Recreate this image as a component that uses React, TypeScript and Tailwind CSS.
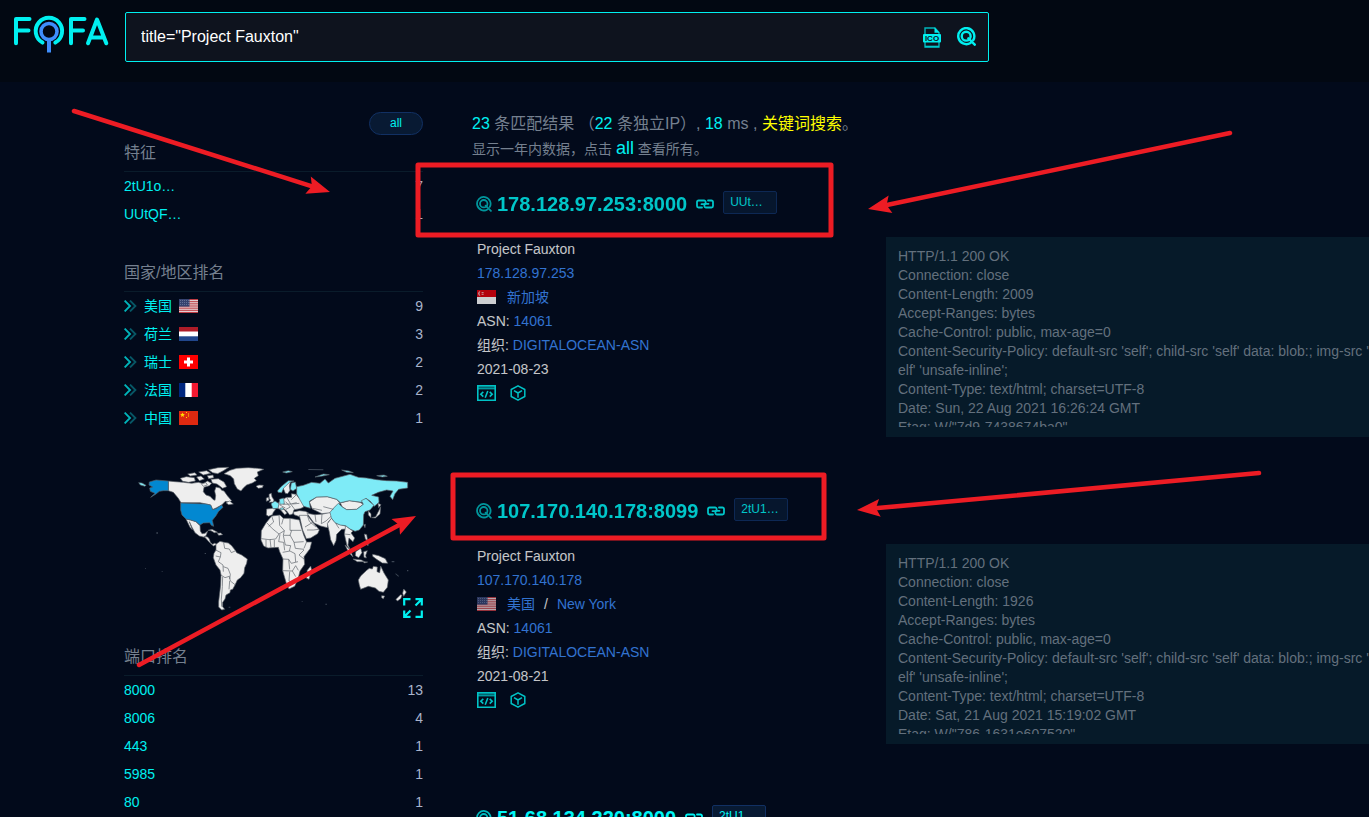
import React from 'react';

type Country = { code: string; name: string; count: number };

type Result = {
  host: string;
  ip: string;
  tag: string;
  country: string;
  code: string;
  city?: string;
  date: string;
  banner: string[];
  dimmed: boolean;
};

const features = [
  { name: '2tU1o…', count: 7 },
  { name: 'UUtQF…', count: 1 },
];

const countries: Country[] = [
  { code: 'us', name: '美国', count: 9 },
  { code: 'nl', name: '荷兰', count: 3 },
  { code: 'ch', name: '瑞士', count: 2 },
  { code: 'fr', name: '法国', count: 2 },
  { code: 'cn', name: '中国', count: 1 },
];

const ports = [
  { name: '8000', count: 13 },
  { name: '8006', count: 4 },
  { name: '443', count: 1 },
  { name: '5985', count: 1 },
  { name: '80', count: 1 },
];

const makeBanner = (length: string, date: string, etag: string) => [
  'HTTP/1.1 200 OK',
  'Connection: close',
  `Content-Length: ${length}`,
  'Accept-Ranges: bytes',
  'Cache-Control: public, max-age=0',
  "Content-Security-Policy: default-src 'self'; child-src 'self' data: blob:; img-src 's",
  "elf' 'unsafe-inline';",
  'Content-Type: text/html; charset=UTF-8',
  `Date: ${date}`,
  `Etag: W/"${etag}"`,
];

const results: Result[] = [
  {
    host: '178.128.97.253:8000',
    ip: '178.128.97.253',
    tag: 'UUt…',
    country: '新加坡',
    code: 'sg',
    date: '2021-08-23',
    banner: makeBanner('2009', 'Sun, 22 Aug 2021 16:26:24 GMT', '7d9-7438674ba0'),
    dimmed: true,
  },
  {
    host: '107.170.140.178:8099',
    ip: '107.170.140.178',
    tag: '2tU1…',
    country: '美国',
    code: 'us',
    city: 'New York',
    date: '2021-08-21',
    banner: makeBanner('1926', 'Sat, 21 Aug 2021 15:19:02 GMT', '786-1631e607520'),
    dimmed: true,
  },
  {
    host: '51.68.134.220:8000',
    ip: '51.68.134.220',
    tag: '2tU1…',
    country: '法国',
    code: 'fr',
    date: '2021-08-20',
    banner: makeBanner('1926', 'Fri, 20 Aug 2021 11:02:40 GMT', '786-1631e607520'),
    dimmed: false,
  },
];

const Logo: React.FC = () => (
  <svg width="96" height="40" viewBox="13 15 96 40" fill="none" strokeLinecap="round" strokeLinejoin="round" strokeWidth="4" role="img" aria-label="FOFA">
    <g stroke="#00f0f0">
      <path d="M29.5 19H16V43.3M16 30.5h12.500" />
      <path d="M42.5 42.6A13.200 13.200 0 1 1 55.300 42.600" />
      <path d="M84.5 19H71V43.3M71 30.5h12" />
      <path d="M88 43.300L97 19.500L106.300 43.300M91 37.500h12" />
    </g>
    <g stroke="#3f8efc">
      <circle cx="49" cy="31.500" r="8" strokeWidth="3.600" />
      <path d="M49 40v12.500" strokeLinecap="butt" />
    </g>
  </svg>
);

const QueryIcon: React.FC<{ size: number; weight: number }> = ({ size, weight }) => (
  <svg width={size} height={size} viewBox="0 0 18 18" fill="none" stroke="currentColor" strokeWidth={weight} strokeLinecap="round" className="block" aria-hidden="true">
    <path d="M12.800 15.100A7.600 7.600 0 1 1 15.400 12.400" />
    <circle cx="8.700" cy="8.700" r="4.200" />
    <path d="M10.800 10.800L16.800 16.800" />
  </svg>
);

const IcoIcon: React.FC = () => (
  <svg width="18" height="21" viewBox="0 0 18 21" fill="none" className="block" aria-hidden="true">
    <path d="M2 8V1h10L16 5.500v2M2 14.500V20h14v-5.500" stroke="#00b5ba" strokeWidth="1.400" />
    <path d="M11.500 .5L16.500 5.700h-5z" fill="#00f0f0" />
    <path d="M2 19.500h14" stroke="#00c8cc" strokeWidth="1.600" />
    <rect x="0" y="7" width="18" height="8.500" rx="1" fill="#00f0f0" />
    <text x="9" y="14.200" textAnchor="middle" fill="#0e131e" fontSize="8" fontWeight="700" fontFamily="Liberation Sans, sans-serif">ICO</text>
  </svg>
);

const LinkIcon: React.FC = () => (
  <svg width="18" height="10" viewBox="0 0 18 10" fill="none" stroke="currentColor" strokeWidth="1.800" strokeLinecap="round" aria-hidden="true">
    <path d="M5.500 5.200H8a1.300 1.300 0 0 0 1.600-1.300V3A1.500 1.500 0 0 0 8 1.500H2.500A1.500 1.500 0 0 0 1 3v4a1.500 1.500 0 0 0 1.500 1.500H6" />
    <path d="M12.500 4.800H10a1.300 1.300 0 0 0-1.600 1.300V7A1.500 1.500 0 0 0 10 8.500h5.500A1.500 1.500 0 0 0 17 7V3a1.500 1.500 0 0 0-1.500-1.500H12" />
  </svg>
);

const CodeIcon: React.FC = () => (
  <svg width="19" height="16" viewBox="0 0 19 16" fill="none" stroke="currentColor" strokeWidth="1.600" aria-hidden="true">
    <path d="M1 1h17v2.500H1z" fill="currentColor" fillOpacity=".5" stroke="none" />
    <path d="M.8.8h17.400v14.400H.8z" />
    <path d="M1 3.800h17" strokeWidth="1" />
    <path d="M6.300 6.800L3.800 9.200l2.500 2.400M12.700 6.800l2.500 2.400-2.500 2.400M10.800 6L8.200 12.700" />
  </svg>
);

const CubeIcon: React.FC = () => (
  <svg width="16" height="16" viewBox="0 0 16 16" fill="none" stroke="currentColor" strokeWidth="1.500" strokeLinejoin="round" aria-hidden="true">
    <path d="M8 .8l6.800 3.700v7L8 15.200 1.200 11.500v-7z" />
    <path d="M4 5.600L8 8l4-2.400M8 8v4.800" />
  </svg>
);

const ChevronsIcon: React.FC = () => (
  <svg width="13" height="12" viewBox="0 0 13 12" fill="none" strokeWidth="1.900" aria-hidden="true">
    <path d="M6 .6L11.400 6 6 11.400" stroke="#075766" />
    <path d="M.6.600L6 6 .6 11.400" stroke="#00b4ba" />
  </svg>
);

const Flag: React.FC<{ code: string }> = ({ code }) => (
  <svg width="19" height="14" viewBox="0 0 19 14" aria-hidden="true">
    {code === 'us' && (
      <>
        <rect width="19" height="14" fill="#e8dfe2" />
        {[0, 1, 2, 3, 4, 5, 6].map((row) => (
          <rect key={row} y={row * 2.15} width="19" height="1.1" fill="#bd3d44" />
        ))}
        <rect width="10.500" height="7.600" fill="#35426f" />
        <path d="M1 1.500h9M1 3.500h9M1 5.500h9" stroke="#7783a6" strokeWidth=".7" strokeDasharray="1 1" />
      </>
    )}
    {code === 'nl' && (
      <>
        <rect width="19" height="14" fill="#fff" />
        <rect width="19" height="4.500" fill="#ae1c28" />
        <rect y="9.300" width="19" height="4.700" fill="#21468b" />
      </>
    )}
    {code === 'ch' && (
      <>
        <rect width="19" height="14" fill="#f00" />
        <path d="M9.500 2.500v9M5 7h9" stroke="#fff" strokeWidth="3" />
      </>
    )}
    {code === 'fr' && (
      <>
        <rect width="19" height="14" fill="#fff" />
        <rect width="6.300" height="14" fill="#00267f" />
        <rect x="12.700" width="6.300" height="14" fill="#f31830" />
      </>
    )}
    {code === 'cn' && (
      <>
        <rect width="19" height="14" fill="#de2910" />
        <path d="M3.500 1.500l.7 1.600 1.700.1-1.300 1.100.4 1.700-1.500-.9L2 6l.4-1.700-1.300-1.100 1.700-.1z" fill="#ffde00" />
        <path d="M7 1.500h1M9 3h1M9 5h1M7 6.500h1" stroke="#ffde00" strokeWidth="1.100" />
      </>
    )}
    {code === 'sg' && (
      <>
        <rect width="19" height="14" fill="#fff" />
        <rect width="19" height="7" fill="#e0000a" />
        <path d="M3.500 1.300a2.200 2.200 0 1 0 0 4.400 2.600 2.600 0 0 1 0-4.400z" fill="#fff" />
        <path d="M4.600 2.600h2M4.600 4.300h2" stroke="#fff" strokeWidth=".7" />
      </>
    )}
  </svg>
);

const WorldMap: React.FC = () => (
  <svg width="300" height="170" viewBox="12 0 900 510" className="block" role="img" aria-label="World map">
    <g stroke="#5b6068" strokeWidth="2" strokeLinejoin="round">
      <g fill="#eeeeee">
        {/* North America */}
        <path d="M145 78L165 80 190 82 215 85 235 82 250 86 262 78 275 85 268 92 252 97 250 110 258 120 270 124 280 134 285 136 287 122 284 108 288 96 300 99 305 106 312 108 322 122 335 137 326 141 316 139 305 150 290 158 278 164 272 150 258 147 240 143 183 143 175 130 160 112 145 107z" />
        <path d="M181 70l18-5 24 3 3 10-20 4-18-3zM203 57l22-4 6 7-20 3zM230 66l13-3 10 9-15 5zM236 51l24-4 12 8-22 5zM262 62l17-2 2 8-15 3zM273 73l22-2 17 10 8 14-12 5-17-13-14-3zM266 44l28-6 32-1-16 10-17 9-15-3zM244 86l14-3 4 7-12 4zM318 143l11-5 11 9-14 2z" />
        <path d="M312 56L330 46 350 40 385 38 412 40 431 43 412 51 415 62 403 70 409 77 397 84 380 90 370 99 363 108 352 102 343 86 341 72 331 62z" />
        <path d="M408 94l9-4 13 1-3 7-12 2z" />
        <path d="M198 192L212 195 228 200 240 212 241 228 246 236 255 235 263 228 259 240 253 247 238 243 225 233 216 217 208 200 217 224 210 217z" />
        <path d="M252 244L263 246 268 252 271 262 278 268 285 264 289 269 280 273 268 262zM264 226l12-3 17 9-10 1-10-6zM292 235l10-1 6 5-12 2z" />
        {/* South America */}
        <path d="M288 268L300 259 312 262 325 264 335 272 345 285 350 293 365 300 382 312 380 325 374 338 372 355 362 368 352 375 345 390 338 403 331 405 330 413 318 420 315 432 308 442 308 455 314 463 305 465 296 456 296 440 299 415 302 390 303 360 300 345 288 330 280 308 282 295 288 285z" />
        {/* Europe */}
        <path d="M447 118l7-3 2 11 6 9-2 6-13 1 5-7-4-4zM439 129l7-2 1 9-8 3zM440 162l18-2 9 3-7 9-3 7-11 5-7-4zM488 98l14-16 10-3-4 14 2 13-7 10-7-1-4-10z" />
        <path d="M477 140L490 132 500 127 515 127 514 116 528 118 538 130 553 145 550 157 540 161 522 164 518 177 509 180 500 168 490 160 501 175 494 179 480 163 473 160z" />
        <path d="M520 171l18-4 18 2 10 5-3 10-24 1-17-6z" />
        {/* Africa */}
        <path d="M455 183L480 180 490 190 510 190 538 195 543 214 551 240 560 261 575 261 570 281 552 305 554 328 540 348 534 372 524 394 507 402 499 385 488 347 489 312 479 290 475 277 444 279 431 273 423 255 424 227 438 204z" />
        <path d="M562 346l10-13 3 13-8 27-8-4z" />
        {/* Middle East and Asia */}
        <path d="M538 181L562 181 578 202 590 215 598 225 593 236 572 249 559 251 548 225z" />
        <path d="M561 175L585 179 610 177 632 171 638 187 625 201 622 218 602 213 582 204z" />
        <path d="M568 141L590 126 622 125 650 133 660 145 644 157 631 173 606 176 577 162z" />
        <path d="M622 206L634 190 648 205 675 213 688 211 680 222 665 223 650 238 648 257 641 272 632 254 628 231z" />
        <path d="M677 212L690 222 699 228 693 234 704 249 699 260 687 249 684 270 692 286 681 272 673 237z" />
        <path d="M661 144L688 137 720 142 730 148 710 163 680 164 667 156z" />
        <path d="M745 168l8 8 0 12-8-8zM755 188l12-3 9-17 6-13-2 22-14 12zM774 145l9 4-7 9zM733 237l7 2 3 18-7-5zM738 263l7-1-1 10zM732 210l4-2-1 10z" />
        <path d="M675 270l15 14 9 22-12-12zM699 312l25 3 10 5-22 0zM707 290l15-10 4 13-10 15-10-6zM731 290l11-3-5 14 2 8-7-2zM730 320l13 1-10 3zM758 298l18 4 20 9 7 14-16-1-17-11-12-9z" />
        {/* Oceania */}
        <path d="M715 375L722 363 740 346 748 340 757 342 760 334 772 336 771 350 779 353 782 333 792 354 805 375 802 397 790 412 777 409 766 399 745 394 722 403 718 390zM785 422l9 1-4 8-5-3zM851 402l8 9-8 13-3-9zM846 421l-4 10-10 7-4-5 14-14z" />
      </g>
      <g fill="#0288d1">
        <path d="M88 81L108 75 145 78 145 107 130 107 118 109 108 117 92 127 105 115 91 109 89 99 98 96 87 90z" />
        <path d="M182 144L258 147 272 150 278 164 290 160 305 150 309 157 295 170 288 182 277 196 281 214 274 211 269 203 250 204 240 210 228 200 212 195 198 192 186 180 182 165z" />
      </g>
      <g fill="#7eebf7">
        <path d="M530 95L550 91 575 82 600 85 615 72 625 84 645 70 690 58 715 67 740 69 770 74 800 77 830 78 863 82 863 99 836 103 825 116 818 134 810 124 819 108 800 105 775 112 755 121 776 126 777 142 763 154 751 139 738 130 726 142 688 137 661 143 650 133 622 125 590 126 568 139 571 160 551 154 540 135 530 117z" />
        <path d="M630 172L643 157 655 145 667 156 680 164 710 163 730 148 724 137 738 130 751 142 762 151 750 165 735 170 731 179 730 210 718 225 705 229 690 222 677 212 660 210 645 203 634 189z" />
        <path d="M453 146L465 138 477 146 474 160 459 161zM478 133l13-4 2 18-13 1zM473 107l10-12 22-18 17 1-13 4-18 17-6 14-11-1zM514 84l12-3 4 19-11 8-8-5zM488 51l17-4 12 3-18 4zM56 83l10 1 12 7-3 3-14-4zM480 160l9-2 3 5-10 2zM585 66l25-9 18 2-25 5zM665 45l22 3 13 5-20-1zM770 62l22-2 10 4-15 2z" />
      </g>
      <g fill="none">
        <path d="M287 285l16 8-2 13-14-3M311 263l3 17 14 2 6 11 11-5M301 306l-6 14 14 10 1 20M310 335l14 5 7 18-2 14M303 360l12 8 13-4 3 14 14 11M308 365l-1 30-3 38 1 22M329 378l-2 25" />
        <path d="M440 203l17 18 20 16M455 183l6 18-15 13M477 181l2 30 14 16M490 190l-5 18M510 190v36h34M515 226l-5 15-20 0 3-14-16 10-10 15-19 2-24-3M480 238l-4 22M438 254v23M450 252l3 26M463 255v23M476 260l15 2 3 24M490 242l6 28 16 2M510 240l12 22 29-2M512 272l-4 16M522 262l4 18 26 3M488 292l22-4 15 8 2 25M488 312l18 1 8 12 20-5M506 313l3 30M488 347l29 1 10-16 8 14M509 350l-2 28 12 6 15-10M517 348l10 17M552 285l-15 15 15 12M560 260l-8 20" />
        <path d="M562 181l6 18 20 17M578 202l-23 14M561 225l19 0 16-2M585 179l3 22M606 176l-2 30 14-8 15-14M610 155l30 8M578 160l28 6M673 237l18 2M647 205l10 15M500 127l12 20 18-4M490 148l22-1 12 16M497 140l14 16-13 7M530 118l-16 16M538 145l-21 2M478 149l18 10" />
      </g>
    </g>
    <g fill="#3c4654">
      <path d="M109 232h5v4h-5zM254 294h4v3h-4zM326 455h5v3h-5zM125 348h3v2h-3zM75 340h3v2h-3zM545 439h3v2h-3zM616 446h5v3h-5zM827 355l10 8-2 2-9-8zM815 318h8v4h-8zM861 345h4v4h-4zM565 42l45 1v3l-45-1z" />
    </g>
  </svg>
);

const ExpandIcon: React.FC = () => (
  <svg width="20" height="20" viewBox="0 0 20 20" fill="none" stroke="#00f0f0" strokeWidth="2.200" className="block" aria-hidden="true">
    <path d="M1.200 7.500V1.200h6.300M12.500 1.200h6.300v6.300M18.800 12.500v6.300h-6.300M7.500 18.800H1.200v-6.300M12.500 7.500l6-6M7.500 12.500l-6 6" />
  </svg>
);

const SectionTitle: React.FC<{ children: React.ReactNode }> = ({ children }) => (
  <h2 className="box-content h-[30px] border-b border-[#0a1c2b] text-base leading-6 text-[#75808f]">{children}</h2>
);

const Row: React.FC<{ count: number; children: React.ReactNode }> = ({ count, children }) => (
  <li className="flex h-7 items-center justify-between text-sm">
    <a href="#" className="flex items-center gap-[7px] text-[#00f0f0]">
      {children}
    </a>
    <span className="text-[#a9b4cc]">{count}</span>
  </li>
);

const ResultCard: React.FC<{ result: Result }> = ({ result }) => (
  <article className="mb-[61px]">
    <div className={`mb-5 flex h-[26px] items-center pl-1 text-[#00f5f5] ${result.dimmed ? 'opacity-80' : ''}`}>
      <span className="opacity-75">
        <QueryIcon size={16} weight={2} />
      </span>
      <a href="#" className="ml-[5px] text-xl font-bold leading-6">
        {result.host}
      </a>
      <a href="#" aria-label="Open link" className="ml-[9px]">
        <LinkIcon />
      </a>
      <a href="#" className="ml-[9px] h-[23px] w-[54px] self-start rounded-[2px] border border-[#113063] bg-[#081a33] px-1.5 text-xs leading-5">
        {result.tag}
      </a>
    </div>
    <div className="flex">
      <div className={`w-[414px] shrink-0 pl-[5px] text-sm leading-6 text-[#f5f5f5] ${result.dimmed ? 'opacity-80' : ''}`}>
        <p>Project Fauxton</p>
        <p>
          <a href="#" className="text-[#3f8efc]">{result.ip}</a>
        </p>
        <p className="flex h-6 items-center">
          <Flag code={result.code} />
          <a href="#" className="ml-[11px] text-[#3f8efc]">{result.country}</a>
          {result.city && (
            <>
              <span className="mx-[9px]">/</span>
              <a href="#" className="text-[#3f8efc]">{result.city}</a>
            </>
          )}
        </p>
        <p>
          ASN: <a href="#" className="text-[#3f8efc]">14061</a>
        </p>
        <p className="h-6">
          组织: <a href="#" className="text-[#3f8efc]">DIGITALOCEAN-ASN</a>
        </p>
        <p>{result.date}</p>
        <div className="flex h-6 items-center gap-[14px] text-[#00f0f0]">
          <button type="button" aria-label="Show source"><CodeIcon /></button>
          <button type="button" aria-label="Show components"><CubeIcon /></button>
        </div>
      </div>
      <div className="h-[200px] min-w-0 flex-1 bg-[#061a29] py-2.5 pl-3">
        <pre className="h-full overflow-hidden font-[Liberation_Sans,Noto_Sans_CJK_SC,sans-serif] text-sm leading-[19px] text-[#63707d]">
          {result.banner.join('\n')}
        </pre>
      </div>
    </div>
  </article>
);

const arrows = [
  { from: [74, 111], to: [330, 192] },
  { from: [1230, 133], to: [868, 209] },
  { from: [1259, 473], to: [857, 510] },
  { from: [139, 665], to: [416, 516] },
];

// Red marker strokes drawn over the page
const Annotations: React.FC = () => (
  <svg width="1369" height="817" className="pointer-events-none absolute left-0 top-0" fill="none" aria-hidden="true">
    <g stroke="#ed1c24" strokeWidth="5" strokeLinejoin="round">
      <rect x="418" y="165" width="413" height="70" />
      <rect x="453" y="475" width="371" height="63" />
    </g>
    {arrows.map(({ from, to }, index) => {
      const dx = to[0] - from[0];
      const dy = to[1] - from[1];
      const length = Math.hypot(dx, dy);
      const angle = (Math.atan2(dy, dx) * 180) / Math.PI;
      return (
        <g key={index} transform={`translate(${to[0]} ${to[1]}) rotate(${angle})`}>
          <path d={`M${-length} 0H-18`} stroke="#ed1c24" strokeWidth="4.500" strokeLinecap="round" />
          <path d="M0 0L-23 -9L-19 0L-23 9z" fill="#ed1c24" />
        </g>
      );
    })}
  </svg>
);

const App: React.FC = () => {
  return (
    <div className="relative h-screen overflow-hidden bg-[#020a1b] font-[Liberation_Sans,Noto_Sans_CJK_SC,sans-serif]">
      <header className="flex h-[82px] items-start bg-[#020812] pl-[13px] pt-3">
        <a href="#" className="mr-4 mt-[3px]">
          <Logo />
        </a>
        <form className="flex h-[50px] w-[864px] items-center rounded-[2px] border border-[#00f0f0] bg-[#0e131e] pl-[15px] pr-3">
          <input
            type="text"
            aria-label="Search query"
            defaultValue={'title="Project Fauxton"'}
            className="min-w-0 flex-1 bg-transparent text-base text-white outline-none"
          />
          <div className="flex items-start gap-4">
            <button type="button" aria-label="Search by icon">
              <IcoIcon />
            </button>
            <button type="button" aria-label="Search" className="text-[#00f0f0]">
              <QueryIcon size={19} weight={2.3} />
            </button>
          </div>
        </form>
      </header>

      <div className="flex pl-[124px]">
        <aside className="mr-[49px] w-[299px] shrink-0 pt-[30px]">
          <div className="mb-1.5 flex justify-end">
            <button type="button" className="h-[23px] w-[54px] rounded-full border border-[#113063] bg-[#081a33] pb-0.5 text-xs leading-4 text-[#00f0f0]">
              all
            </button>
          </div>

          <SectionTitle>特征</SectionTitle>
          <ul className="mb-[33px]">
            {features.map((item) => (
              <Row key={item.name} count={item.count}>{item.name}</Row>
            ))}
          </ul>

          <SectionTitle>国家/地区排名</SectionTitle>
          <ul className="mb-[23px]">
            {countries.map((item) => (
              <Row key={item.code} count={item.count}>
                <ChevronsIcon />
                <span>{item.name}</span>
                <Flag code={item.code} />
              </Row>
            ))}
          </ul>

          <div className="relative mb-5">
            <WorldMap />
            <button type="button" aria-label="Expand map" className="absolute bottom-[7px] right-0">
              <ExpandIcon />
            </button>
          </div>

          <SectionTitle>端口排名</SectionTitle>
          <ul>
            {ports.map((item) => (
              <Row key={item.name} count={item.count}>{item.name}</Row>
            ))}
          </ul>
        </aside>

        <main className="min-w-0 flex-1 pt-[30px]">
          <p className="h-6 whitespace-nowrap text-base leading-6 text-[#75808f]">
            <span className="text-[#00f0f0]">23</span> 条匹配结果 （<span className="text-[#00f0f0]">22</span> 条独立IP）,{' '}
            <span className="text-[#00f0f0]">18</span> ms , <span className="text-[#ffff00]">关键词搜索</span>。
          </p>
          <p className="mb-[31px] h-6 whitespace-nowrap text-sm leading-6 text-[#75808f]">
            显示一年内数据，点击 <a href="#" className="text-lg leading-6 text-[#00f0f0]">all</a> 查看所有。
          </p>
          {results.map((result) => (
            <ResultCard key={result.host} result={result} />
          ))}
        </main>
      </div>

      <Annotations />
    </div>
  );
};

export default App;
